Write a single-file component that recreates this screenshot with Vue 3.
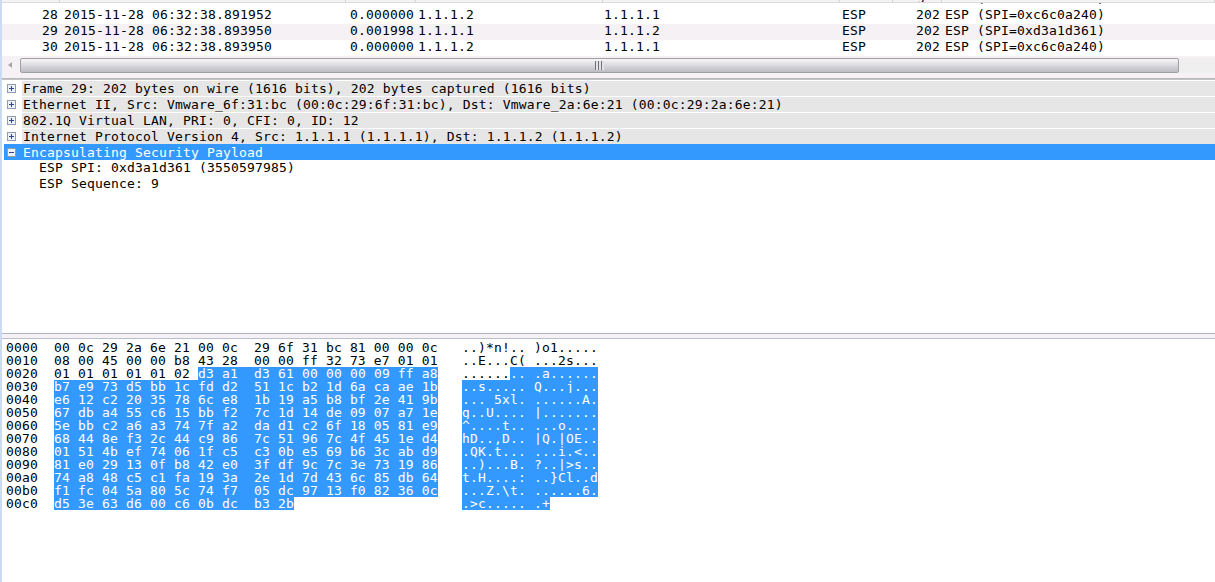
<script setup>
const headers = ['No.', 'Time', 'Delta', 'Source', 'Destination', 'Protocol', 'Length', 'Info']

const packets = [
  { no: 27, time: '2015-11-28 06:32:38.889950', delta: '0.000000', src: '1.1.1.1', dst: '1.1.1.2', info: 'ESP (SPI=0xd3a1d361)' },
  { no: 28, time: '2015-11-28 06:32:38.891952', delta: '0.000000', src: '1.1.1.2', dst: '1.1.1.1', info: 'ESP (SPI=0xc6c0a240)' },
  { no: 29, time: '2015-11-28 06:32:38.893950', delta: '0.001998', src: '1.1.1.1', dst: '1.1.1.2', info: 'ESP (SPI=0xd3a1d361)', tint: true },
  { no: 30, time: '2015-11-28 06:32:38.893950', delta: '0.000000', src: '1.1.1.2', dst: '1.1.1.1', info: 'ESP (SPI=0xc6c0a240)' }
]

const summary = [
  { text: 'Frame 29: 202 bytes on wire (1616 bits), 202 bytes captured (1616 bits)' },
  { text: 'Ethernet II, Src: Vmware_6f:31:bc (00:0c:29:6f:31:bc), Dst: Vmware_2a:6e:21 (00:0c:29:2a:6e:21)' },
  { text: '802.1Q Virtual LAN, PRI: 0, CFI: 0, ID: 12' },
  { text: 'Internet Protocol Version 4, Src: 1.1.1.1 (1.1.1.1), Dst: 1.1.1.2 (1.1.1.2)' },
  { text: 'Encapsulating Security Payload', open: true }
]

const details = ['ESP SPI: 0xd3a1d361 (3550597985)', 'ESP Sequence: 9']

const dump = `00 0c 29 2a 6e 21 00 0c 29 6f 31 bc 81 00 00 0c
08 00 45 00 00 b8 43 28 00 00 ff 32 73 e7 01 01
01 01 01 01 01 02 d3 a1 d3 61 00 00 00 09 ff a8
b7 e9 73 d5 bb 1c fd d2 51 1c b2 1d 6a ca ae 1b
e6 12 c2 20 35 78 6c e8 1b 19 a5 b8 bf 2e 41 9b
67 db a4 55 c6 15 bb f2 7c 1d 14 de 09 07 a7 1e
5e bb c2 a6 a3 74 7f a2 da d1 c2 6f 18 05 81 e9
68 44 8e f3 2c 44 c9 86 7c 51 96 7c 4f 45 1e d4
01 51 4b ef 74 06 1f c5 c3 0b e5 69 b6 3c ab d9
81 e0 29 13 0f b8 42 e0 3f df 9c 7c 3e 73 19 86
74 a8 48 c5 c1 fa 19 3a 2e 1d 7d 43 6c 85 db 64
f1 fc 04 5a 80 5c 74 f7 05 dc 97 13 f0 82 36 0c
d5 3e 63 d6 00 c6 0b dc b3 2b`

const selectionStart = 0x26

function printable(hex) {
  const code = parseInt(hex, 16)
  return code >= 32 && code < 127 ? String.fromCharCode(code) : '.'
}

function groupText(items, sep, mid) {
  return items
    .map((item, i) => (i === 0 ? '' : i === 8 ? mid : sep) + item)
    .join('')
}

const lines = dump.split('\n').map((line, i) => {
  const bytes = line.split(' ')
  const base = i * 16
  const cut = Math.min(Math.max(selectionStart - base, 0), bytes.length)
  const hex = groupText(bytes, ' ', '  ')
  const ascii = groupText(bytes.map(printable), '', ' ')
  const hexCut = cut === 0 ? 0 : cut * 3 + (cut >= 8 ? 1 : 0)
  const asciiCut = cut === 0 ? 0 : cut + (cut >= 8 ? 1 : 0)
  return {
    offset: base.toString(16).padStart(4, '0'),
    hexPlain: hex.slice(0, hexCut),
    hexSel: hex.slice(hexCut),
    asciiPlain: ascii.slice(0, asciiCut),
    asciiSel: ascii.slice(asciiCut)
  }
})
</script>

<template>
  <div class="app">
    <section class="packets">
      <div class="head grid">
        <span v-for="h in headers" :key="h" class="head-cell">{{ h }}</span>
      </div>
      <div class="rows">
        <div v-for="p in packets" :key="p.no" class="row grid" :class="{ tint: p.tint }">
          <span class="no">{{ p.no }}</span>
          <span class="time">{{ p.time }}</span>
          <span class="delta">{{ p.delta }}</span>
          <span class="src">{{ p.src }}</span>
          <span class="dst">{{ p.dst }}</span>
          <span class="proto">ESP</span>
          <span class="len">202</span>
          <span class="info">{{ p.info }}</span>
        </div>
      </div>
    </section>

    <div class="hbar">
      <span class="arrow"></span>
      <div class="thumb">
        <span class="grip"></span>
      </div>
      <div class="track"></div>
    </div>

    <section class="tree">
      <div
        v-for="s in summary"
        :key="s.text"
        class="node"
        :class="{ open: s.open }"
      >
        <svg class="box" width="9" height="9" viewBox="0 0 9 9">
          <rect x="0.5" y="0.5" width="8" height="8" fill="#eef1f6" stroke="#8f9db3" />
          <path v-if="s.open" d="M2 4.5h5" stroke="#33468f" fill="none" />
          <path v-else d="M2 4.5h5M4.5 2v5" stroke="#33468f" fill="none" />
        </svg>
        <span class="node-text">{{ s.text }}</span>
      </div>
      <div v-for="d in details" :key="d" class="leaf">{{ d }}</div>
    </section>

    <div class="gap"></div>

    <section class="hex">
      <div v-for="l in lines" :key="l.offset" class="hex-line">
        <span class="offset">{{ l.offset }}</span>
        <span class="bytes">{{ l.hexPlain }}<span v-if="l.hexSel" class="sel">{{ l.hexSel }}</span></span>
        <span class="ascii">{{ l.asciiPlain }}<span v-if="l.asciiSel" class="sel">{{ l.asciiSel }}</span></span>
      </div>
    </section>
  </div>
</template>

<style>
html, body { margin: 0; background: #fff; overflow: hidden; }
</style>

<style scoped>
.app {
  width: 1215px;
  height: 582px;
  overflow: hidden;
  box-sizing: border-box;
  border-left: 2px solid #cbdcf2;
  background: #fff;
  color: #000;
  font-family: "DejaVu Sans Mono", "Liberation Mono", monospace;
  font-size: 13px;
  letter-spacing: 0.17px;
  white-space: pre;
}

.packets { height: 56px; overflow: hidden; }

.grid {
  display: grid;
  grid-template-columns: 58px 286px 70px 187px 237px 53px 49px 1fr;
}

.head {
  height: 2px;
  overflow: hidden;
  background: #f4f2f4;
  border-bottom: 1px solid #dcdcdc;
}
.head-cell {
  height: 16px;
  line-height: 16px;
  margin-top: -12px;
  border-right: 1px solid #d4d4d4;
  box-sizing: border-box;
}

.rows { height: 53px; overflow: hidden; }

.row { height: 16px; line-height: 14px; }
.row:first-child { margin-top: -11px; }
.tint { background: #f5f1f5; }

.no { text-align: right; padding-right: 2px; }
.time { padding-left: 4px; }
.delta { text-align: right; padding-right: 2px; }
.src { padding-left: 2px; }
.dst { padding-left: 1px; }
.proto { padding-left: 2px; }
.len { text-align: right; padding-right: 2px; }
.info { padding-left: 3px; }

.hbar {
  height: 20px;
  display: flex;
  align-items: flex-start;
  padding-top: 2px;
  background: #f5f1f5;
  border-bottom: 1px solid #b8b8b8;
}
.arrow {
  width: 0;
  height: 0;
  margin: 4px 7px 0 6px;
  border-top: 3.5px solid transparent;
  border-bottom: 3.5px solid transparent;
  border-right: 4px solid #a8a8a8;
}
.thumb {
  width: 1159px;
  height: 15px;
  box-sizing: border-box;
  border: 1px solid #a0a0a0;
  border-radius: 2px;
  background: linear-gradient(#f6f6f8 0%, #e6e6ea 30%, #d2d2d8 60%, #bdbdc4 100%);
  display: flex;
  align-items: center;
  justify-content: center;
  margin-left: 1px;
}
.grip {
  width: 9px;
  height: 9px;
  background: repeating-linear-gradient(90deg, #6f6f76 0 1px, #e4e4e8 1px 3px);
}
.track {
  flex: 1;
  height: 15px;
  background: #efefef;
}

.tree {
  height: 255px;
  box-sizing: border-box;
  border-top: 1px solid #c4c4c4;
  border-bottom: 1px solid #aeb4c0;
}

.node {
  display: flex;
  align-items: center;
  height: 16px;
  line-height: 15px;
}
.box { flex: none; margin: 0 6px 0 5px; }
.node-text {
  flex: 1;
  height: 15px;
  padding-left: 1px;
  background: #e6e6e6;
}
.node.open {
  margin-left: 2px;
  background: #3399ff;
  color: #fff;
}
.node.open .box { margin-left: 3px; }
.node.open .node-text { background: transparent; }

.leaf {
  height: 16px;
  line-height: 16px;
  padding-left: 37px;
}

.gap {
  height: 4px;
  background: #f5f1f5;
}

.hex {
  border-top: 1px solid #b8c0d0;
  padding-top: 2px;
  padding-left: 4px;
  line-height: 13px;
}

.hex-line { display: flex; height: 13px; line-height: 13px; }
.offset { width: 48px; flex: none; }
.bytes { width: 408px; flex: none; }
.ascii { flex: none; }
.sel {
  display: inline-block;
  height: 13px;
  line-height: 13px;
  vertical-align: top;
  background: #3399ff;
  color: #fff;
}
</style>
